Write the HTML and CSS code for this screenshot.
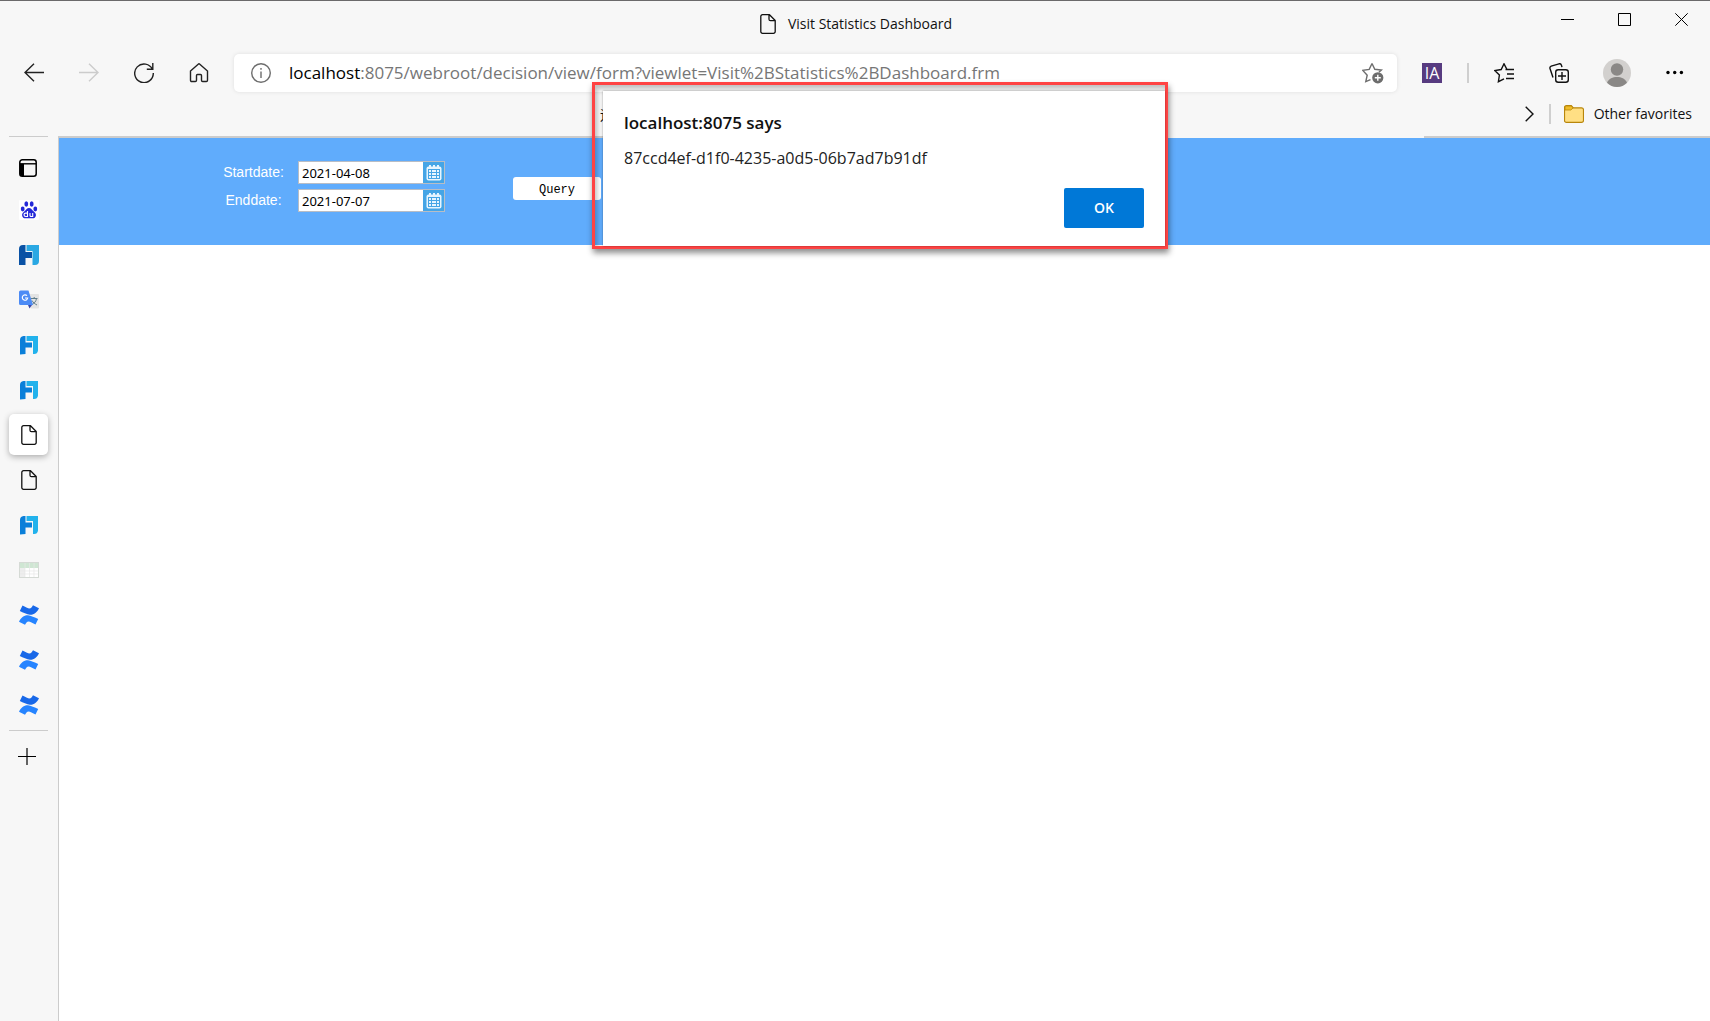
FILE: index.html
```html
<!DOCTYPE html>
<html lang="en">
<head>
<meta charset="utf-8">
<title>Visit Statistics Dashboard</title>
<link rel="stylesheet" href="styles.css">
</head>
<body>
<svg class="defs" aria-hidden="true">
  <symbol id="page" viewBox="0 0 20 20"><path d="M5 .7h6.500L17.200 6.500V17.600a1.700 1.700 0 0 1-1.700 1.700H4.500a1.700 1.700 0 0 1-1.700-1.700V2.400A1.700 1.700 0 0 1 4.500.7zM11 .9V5.200a1.500 1.500 0 0 0 1.500 1.500H17" fill="none" stroke="currentColor" stroke-width="1.300" stroke-linejoin="round"/></symbol>
  <symbol id="fine" viewBox="0 0 20 20"><path d="M4.500 1H6.500v6.500H13v5H6.500v6.500L1 19.500V5a4 4 0 0 1 3.500-4z" fill="#0a7fd9"/><path d="M7.500 1H19v14.500a4 4 0 0 1-4 3.500h-1V6H7.500z" fill="#22b2ec"/></symbol>
  <symbol id="confluence" viewBox="0 0 20 20"><path d="M3.500.5 8 2.800c2 1 3.500.8 4.700-.6L14 .3 20 3.300c-2 4-5 6.700-9 6.500C8 9.600 4 7.500.8 6.100z" fill="#1868e8"/><path d="M16.500 19.500 12 17.200c-2-1-3.500-.8-4.700.6L6 19.700 0 16.700c2-4 5-6.700 9-6.500 2.500.2 7 2.300 10.200 3.700z" fill="#2684ff"/></symbol>
  <symbol id="calendar" viewBox="0 0 16 16"><rect x=".5" y="1.500" width="15" height="14" rx="2" fill="#e6f5ff"/><path d="M4 0v3M8 0v3M12 0v3" stroke="#e6f5ff" stroke-width="2"/><path d="M2 4.500h12M2 7.500h12M2 10.500h12M2 13.500h12M5.500 5v9M10.500 5v9M2.500 5v9M13.500 5v9" stroke="#45a5e6" stroke-width="1"/></symbol>
</svg>

<header class="browser">
  <div class="titlebar">
    <div class="title"><svg width="20" height="20"><use href="#page"/></svg><span>Visit Statistics Dashboard</span></div>
    <div class="window-controls">
      <button aria-label="Minimize"><svg width="13" height="13"><path d="M0 6.500h13" stroke="#000"/></svg></button>
      <button aria-label="Maximize"><svg width="13" height="13"><path d="M.5.5h12v12H.5z" fill="none" stroke="#000"/></svg></button>
      <button aria-label="Close"><svg width="13" height="13"><path d="M.3.300l12.400 12.400M12.700.3.3 12.700" stroke="#000"/></svg></button>
    </div>
  </div>
  <div class="toolbar">
    <nav class="nav">
      <button aria-label="Back"><svg width="20" height="20" viewBox="0 0 20 20"><path d="M20 9.500H1M10 .8 1 9.500l9 8.700" class="line"/></svg></button>
      <button aria-label="Forward" class="off"><svg width="20" height="20" viewBox="0 0 20 20"><path d="M0 9.500h19M10 .8l9 8.700-9 8.700" class="line"/></svg></button>
      <button aria-label="Refresh"><svg width="20" height="20" viewBox="0 0 20 20"><path d="M18.500 6.500A9.300 9.300 0 1 0 19.300 10M18.800 0v6.300h-6" class="line"/></svg></button>
      <button aria-label="Home"><svg width="20" height="20" viewBox="0 0 20 20"><path d="M1.500 8 9.200 1.200a1.200 1.200 0 0 1 1.600 0L18.500 8v9.300a1.200 1.200 0 0 1-1.200 1.200h-3.600a1.200 1.200 0 0 1-1.200-1.200v-4.800a1 1 0 0 0-1-1h-3a1 1 0 0 0-1 1v4.800a1.200 1.200 0 0 1-1.200 1.200H2.700a1.200 1.200 0 0 1-1.200-1.200z" class="line"/></svg></button>
    </nav>
    <div class="address">
      <svg class="muted" width="20" height="20" viewBox="0 0 20 20"><circle cx="10" cy="10" r="9.300" class="line"/><path d="M10 8.500v6.500M10 5v1.700" class="line"/></svg>
      <div class="url" role="textbox" aria-label="Address" contenteditable="true" spellcheck="false"><span class="host">localhost</span>:8075/webroot/decision/view/form?viewlet=Visit%2BStatistics%2BDashboard.frm</div>
      <button class="muted" aria-label="Add to favorites"><svg width="22" height="22" viewBox="0 0 22 22"><path d="m10 1.500 2.800 5.800 6.600.7-2.500 2.300M8.500 17.600l-4.700 2L5.200 13.200.8 8.400l6.400-1L10 1.500" class="line"/><circle cx="15.800" cy="15.800" r="5.600" fill="#6d6d6d"/><path d="M15.800 12.800v6M12.800 15.800h6" stroke="#fff" stroke-width="1.400"/></svg></button>
    </div>
    <div class="tools">
      <button class="ia" aria-label="IA extension">IA</button>
      <span class="divider"></span>
      <button aria-label="Favorites"><svg width="20" height="20" viewBox="0 0 20 20"><path d="M11.500 6.500h8.500M13 11h7M12 15.500h8M13 6.500 10 .8 7.200 6.500.8 7.500l4.600 4.600-1 6.600 5.600-2.900" class="line"/></svg></button>
      <button aria-label="Collections"><svg width="20" height="20" viewBox="0 0 20 20"><rect x="6.700" y="6.700" width="12.600" height="12.600" rx="2.500" class="line"/><path d="M13 9v8M9 13h8M4 14.500 1 5.500a2 2 0 0 1 1.200-2.400L10 .8a2 2 0 0 1 2.400 1.300l.6 2" class="line"/></svg></button>
      <button class="profile" aria-label="Profile"><svg width="28" height="28" viewBox="0 0 28 28"><circle cx="14" cy="14" r="14" fill="#d2d0ce"/><circle cx="14" cy="10.500" r="6.200" fill="#8a8886"/><path d="M4 23.700C6 19.500 9.700 18 14 18s8 1.500 10 5.700A14 14 0 0 1 4 23.700z" fill="#8a8886"/></svg></button>
      <button aria-label="Settings and more"><svg width="20" height="20" viewBox="0 0 20 20"><circle cx="3" cy="9.500" r="1.700"/><circle cx="9.700" cy="9.500" r="1.700"/><circle cx="16.400" cy="9.500" r="1.700"/></svg></button>
    </div>
  </div>
  <div class="favorites">
    <span class="hidden-favorite">运</span>
    <button aria-label="More favorites"><svg width="9" height="16" viewBox="0 0 9 16"><path d="m.7.8 7.300 7.200-7.300 7.200" class="line"/></svg></button>
    <span class="divider"></span>
    <button class="folder"><svg width="20" height="18" viewBox="0 0 20 18"><path d="M2.500.6h4.800l2 2.200h8.200a2 2 0 0 1 2 2v10.600a2 2 0 0 1-2 2H2.500a2 2 0 0 1-2-2V2.600a2 2 0 0 1 2-2z" fill="#ffdf84" stroke="#b8860b" stroke-width="1.200"/><path d="M1 5h5.800l2.300-2L7.200 1H2.500A1.500 1.500 0 0 0 1 2.600z" fill="#f0bd28" stroke="#b8860b" stroke-width=".8"/></svg>Other favorites</button>
  </div>
</header>

<div class="workspace">
  <aside class="tabs">
    <button class="menu" aria-label="Tab actions"><svg width="20" height="20" viewBox="0 0 20 20"><rect x=".8" y="1.800" width="16.400" height="16.400" rx="2.500" fill="none" stroke="#000" stroke-width="1.500"/><path d="M1 5.800h16" stroke="#000" stroke-width="1.400"/><path d="M1 6h4v12H3a2 2 0 0 1-2-2z"/></svg></button>
    <button aria-label="Baidu"><svg width="20" height="20" viewBox="0 0 20 20"><rect width="20" height="20" rx="1" fill="#fff"/><g fill="#2529d8"><ellipse cx="7.300" cy="4" rx="1.900" ry="2.700"/><ellipse cx="12.700" cy="4" rx="1.900" ry="2.700"/><ellipse cx="3.700" cy="9" rx="1.900" ry="2.400"/><ellipse cx="16.300" cy="9" rx="1.900" ry="2.400"/><path d="M10 8c2 0 2.800 1.600 4.200 3 1.500 1.500 3 2.300 2.700 4.500-.3 2.500-2.300 3-4 2.800-2-.2-3.700-.2-5.800 0-1.700.2-3.700-.3-4-2.800-.3-2.200 1.200-3 2.700-4.500C7.200 9.600 8 8 10 8z"/></g><path d="M8.500 11v5.500H6.700a1.500 1.500 0 0 1 0-3.400h1.800M11 13v2.500q0 1 1 1h1.700V13" fill="none" stroke="#fff" stroke-width="1.100"/></svg></button>
    <button aria-label="FineReport"><svg width="20" height="20" viewBox="0 0 20 20"><path d="M4 0h2.500v7H13v6H6.500v7H0V4a4 4 0 0 1 4-4z" fill="#0952a5"/><path d="M7.500 0H20v16a4 4 0 0 1-4 4h-2.500V6h-6z" fill="#2aa8e3"/></svg></button>
    <button aria-label="Translate"><svg width="20" height="20" viewBox="0 0 20 20"><path d="M8 4h11a1 1 0 0 1 1 1v12.500a1 1 0 0 1-1 1h-7z" fill="#e3e3e3"/><path d="M12 8.500h6.500M15.200 7v1.500M17.500 8.500c-.5 3-2.300 5-4.500 6M13 10.500c1 2 3 3.500 5 4.500" fill="none" stroke="#607d8b"/><path d="M9 15h4l-2.500 3.500z" fill="#3949ab"/><path d="M1.500.5h8L14 15H1.500A1.500 1.500 0 0 1 0 13.500V2A1.500 1.500 0 0 1 1.500.5z" fill="#4c8bf5"/><path d="M8 5.700A2.700 2.700 0 1 0 8.700 8H6" fill="none" stroke="#fff" stroke-width="1.200"/></svg></button>
    <button aria-label="FineReport help"><svg width="20" height="20"><use href="#fine"/></svg></button>
    <button aria-label="FineReport help"><svg width="20" height="20"><use href="#fine"/></svg></button>
    <button class="selected" aria-label="Visit Statistics Dashboard"><svg width="20" height="20"><use href="#page"/></svg></button>
    <button aria-label="Untitled page"><svg width="20" height="20"><use href="#page"/></svg></button>
    <button aria-label="FineReport help"><svg width="20" height="20"><use href="#fine"/></svg></button>
    <button aria-label="Spreadsheet"><svg width="20" height="20" viewBox="0 0 20 20"><rect x=".5" y="2.500" width="19" height="15" fill="#fff" stroke="#d5dad5"/><path d="M1 3h18v5H1z" fill="#cfe6d3"/><path d="M1 8h5v9H1z" fill="#eee"/><path d="M1 11h18M1 14h18M6 3v14M10.500 3v14M15 3v14" stroke="#e6e6e6" stroke-width=".7"/></svg></button>
    <button aria-label="Confluence"><svg width="20" height="20"><use href="#confluence"/></svg></button>
    <button aria-label="Confluence"><svg width="20" height="20"><use href="#confluence"/></svg></button>
    <button aria-label="Confluence"><svg width="20" height="20"><use href="#confluence"/></svg></button>
    <button class="new-tab" aria-label="New tab"><svg width="18" height="18" viewBox="0 0 18 18"><path d="M0 8.500h18M9 0v17" stroke="#000" stroke-width="1.200"/></svg></button>
  </aside>
  <main>
    <form class="query" onsubmit="return false">
      <div class="fields">
        <label for="start">Startdate:</label>
        <div class="date"><input id="start" type="text" value="2021-04-08"><button type="button" aria-label="Pick start date"><svg width="16" height="16"><use href="#calendar"/></svg></button></div>
        <label for="end">Enddate:</label>
        <div class="date"><input id="end" type="text" value="2021-07-07"><button type="button" aria-label="Pick end date"><svg width="16" height="16"><use href="#calendar"/></svg></button></div>
      </div>
      <button class="submit">Query</button>
    </form>
  </main>
</div>

<div class="overlay">
  <div class="highlight">
    <section class="alert" role="alertdialog" aria-labelledby="alert-title">
      <h1 id="alert-title">localhost:8075 says</h1>
      <p>87ccd4ef-d1f0-4235-a0d5-06b7ad7b91df</p>
      <button>OK</button>
    </section>
  </div>
</div>
</body>
</html>
```
FILE: styles.css
```css
* { box-sizing: border-box; }

body {
  margin: 0;
  min-height: 100vh;
  display: flex;
  flex-direction: column;
  position: relative;
  background: #f7f7f7;
  color: #111;
  font: 15px/20px "Open Sans", "Noto Sans", sans-serif;
}

button {
  display: flex;
  align-items: center;
  justify-content: center;
  padding: 0;
  border: 0;
  background: none;
  color: inherit;
  font: inherit;
}

svg { display: block; flex: none; }
.defs { position: absolute; width: 0; height: 0; }
.line { fill: none; stroke: currentColor; stroke-width: 1.4; }
.muted { color: #6d6d6d; }
.divider { width: 2px; height: 20px; background: #cfcfcf; }

/* Browser chrome */
.browser { border-top: 1px solid #6b6a6b; }

.titlebar {
  display: grid;
  grid-template-columns: 1fr auto 1fr;
  height: 46px;
  align-items: center;
}
.title { grid-column: 2; display: flex; gap: 10px; align-items: center; font-size: 14px; }
.window-controls { display: flex; justify-content: flex-end; align-self: start; padding: 12px 22px 0 0; gap: 44px; }

.toolbar { display: flex; align-items: center; height: 51px; }
.nav { display: flex; gap: 35px; padding: 0 25px 0 24px; color: #222; }
.off { color: #ccc; }
.address {
  flex: 1;
  display: flex;
  align-items: center;
  height: 38px;
  padding: 0 13px 0 17px;
  border-radius: 5px;
  background: #fff;
  box-shadow: 0 0 4px #0000001a;
}
.url { flex: 1; padding-left: 18px; font-size: 17px; color: #767676; white-space: nowrap; outline: 0; }
.host { color: #000; }
.tools { display: flex; align-items: center; gap: 35px; padding: 0 25px; }
.tools .divider { margin: 0 -10px; }
.ia { width: 20px; height: 20px; background: #573b80; color: #fff; font-size: 16px; }
.profile { margin: 0 -1px; }

.favorites { display: flex; align-items: center; justify-content: flex-end; height: 32px; padding-right: 18px; gap: 15px; }
.hidden-favorite { margin: 0 auto 0 600px; font: 14px/20px "Noto Sans CJK SC", sans-serif; }
.folder { gap: 10px; margin-left: -2px; font-size: 14px; }

/* Page area */
.workspace { flex: 1; display: flex; margin-top: 6px; }
.tabs {
  width: 58px;
  display: flex;
  flex-direction: column;
  align-items: center;
  padding-right: 1px;
}
.tabs button { width: 39px; height: 41px; margin-bottom: 4px; border-radius: 5px; }
.tabs .menu { height: 63px; margin-bottom: -10px; border-top: 1px solid #ccc; border-radius: 0; }
.tabs .selected { background: #fff; box-shadow: 0 2px 6px #0000004d; }
.tabs .new-tab { height: 52px; margin-top: 1px; border-top: 1px solid #ccc; border-radius: 0; padding-right: 4px; }

main { flex: 1; border-left: 1px solid #ccc; background: #fff; }
main::before {
  content: "";
  display: block;
  height: 2px;
  background: linear-gradient(90deg, #ccc 545px, #f7f7f7 545px calc(100% - 286px), #ccc 0);
}
.query { display: flex; height: 107px; padding: 23px 0 0 164px; gap: 68px; background: #60acfc; }
.fields {
  display: grid;
  grid-template-columns: 61px 147px;
  grid-auto-rows: 23px;
  gap: 5px 14px;
  align-content: start;
}
.fields label { color: #fff; text-align: center; font: 14px/23px "Liberation Sans", Arial, sans-serif; white-space: nowrap; }
.date { display: flex; border: 1px solid #b8bdc5; }
.date input { flex: 1; min-width: 0; padding: 2px 3px 0; border: 0; color: #000; font: 13px/19px "Noto Sans", sans-serif; }
.date button { width: 21px; background: #45a5e6; }
.submit { width: 88px; height: 23px; margin-top: 16px; padding-top: 2px; border-radius: 3px; background: #fff; color: #000; font: 12px/20px "Liberation Mono", monospace; }

/* Message box laid over the page */
.overlay { position: absolute; top: 82px; left: 50px; right: 0; display: flex; justify-content: center; }
.highlight { width: 576px; padding: 6px 0 0 8px; border: 3px solid #ff4343; box-shadow: 1px 4px 6px #00000073, inset 2px 4px 5px #00000040; }
.alert { display: flex; flex-direction: column; align-items: flex-start; padding: 20px 21px 18px; background: #fff; box-shadow: 0 0 2px #0006; }
.alert h1 { margin: 0; font-size: 17px; line-height: 24px; font-weight: 600; }
.alert p { margin: 12px 0 19px; color: #222; font-size: 16px; line-height: 22px; }
.alert button { align-self: flex-end; width: 80px; height: 40px; border-radius: 2px; background: #0078d7; color: #fff; font-weight: 600; font-size: 14px; }
```
